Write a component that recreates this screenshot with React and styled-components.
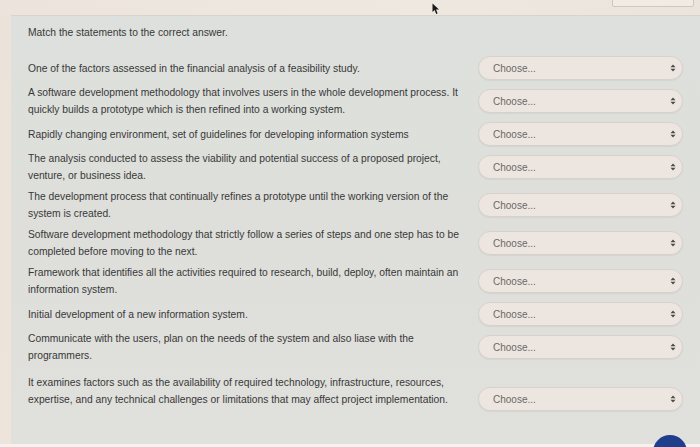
import React from "react";
import styled, { createGlobalStyle } from "styled-components";

const Global = createGlobalStyle`
  html, body { margin: 0; padding: 0; }
  body {
    width: 700px;
    height: 447px;
    overflow: hidden;
    background: #ebe5de;
    font-family: "Liberation Sans", Arial, sans-serif;
  }
`;

const Page = styled.div`
  position: relative;
  width: 700px;
  height: 447px;
  display: flex;
  flex-direction: column;
`;

const TopStrip = styled.div`
  height: 15px;
  flex-shrink: 0;
  background: linear-gradient(90deg, #ece4dc, #efe8e1 60%, #eae4dd);
  position: relative;
`;

const TopBox = styled.div`
  position: absolute;
  left: 612px;
  top: -6px;
  width: 80px;
  height: 11px;
  border: 1px solid #d4c6bc;
  border-radius: 2px;
  background: #f1ebe4;
`;

const Body = styled.div`
  flex: 1;
  display: flex;
  min-height: 0;
`;

const LeftEdge = styled.div`
  width: 11px;
  flex-shrink: 0;
  background: linear-gradient(180deg, #ebe2da, #ede4dc);
`;

const Panel = styled.div`
  flex: 1;
  background: linear-gradient(180deg, #dde0dc 0%, #dedfdb 50%, #e0e0dc 100%);
  border-top: 1px solid #d7d4ce;
  padding: 8px 0 0 17px;
  box-sizing: border-box;
  color: #383838;
  font-size: 10.3px;
`;

const Title = styled.div`
  line-height: 18px;
  margin-bottom: 14px;
`;

const List = styled.div`
  display: flex;
  flex-direction: column;
  gap: 4px;
`;

const Row = styled.div`
  display: grid;
  grid-template-columns: 450px 205px;
  align-items: center;
  margin-top: ${(p) => (p.$extra ? "6px" : "0")};
`;

const Statement = styled.div`
  line-height: 17px;
  padding-right: 4px;
  white-space: nowrap;
`;

const Select = styled.div`
  height: 24px;
  border-radius: 12px;
  background: #ede6e0;
  border: 1px solid #d8d1cb;
  box-shadow: 0 1px 1px rgba(0, 0, 0, 0.05);
  box-sizing: border-box;
  display: flex;
  align-items: center;
  justify-content: space-between;
  padding: 0 6px 0 14px;
  color: #6b6866;
  font-size: 10px;
  transform: translateY(${(p) => p.$shift || 0}px);
`;

const Arrows = () => (
  <svg width="6" height="8" viewBox="0 0 6 8">
    <path d="M3 0.5 L5.5 3.3 H0.5 Z" fill="#4a4a4a" />
    <path d="M3 7.5 L5.5 4.7 H0.5 Z" fill="#4a4a4a" />
  </svg>
);

const Cursor = styled.svg`
  position: absolute;
  left: 432px;
  top: 3px;
`;

const Dot = styled.div`
  position: absolute;
  left: 653px;
  top: 435px;
  width: 34px;
  height: 34px;
  border-radius: 50%;
  background: #1f3f8c;
`;

const BottomStrip = styled.div`
  height: 3px;
  flex-shrink: 0;
  background: #f4f3ef;
`;

const statements = [
  ["One of the factors assessed in the financial analysis of a feasibility study."],
  [
    "A software development methodology that involves users in the whole development process. It",
    "quickly builds a prototype which is then refined into a working system.",
  ],
  ["Rapidly changing environment, set of guidelines for developing information systems"],
  [
    "The analysis conducted to assess the viability and potential success of a proposed project,",
    "venture, or business idea.",
  ],
  [
    "The development process that continually refines a prototype until the working version of the",
    "system is created.",
  ],
  [
    "Software development methodology that strictly follow a series of steps and one step has to be",
    "completed before moving to the next.",
  ],
  [
    "Framework that identifies all the activities required to research, build, deploy, often maintain an",
    "information system.",
  ],
  ["Initial development of a new information system."],
  [
    "Communicate with the users, plan on the needs of the system and also liase with the",
    "programmers.",
  ],
  [
    "It examines factors such as the availability of required technology, infrastructure, resources,",
    "expertise, and any technical challenges or limitations that may affect project implementation.",
  ],
];

export default function App() {
  return (
    <Page>
      <Global />
      <TopStrip>
        <TopBox />
      </TopStrip>
      <Body>
        <LeftEdge />
        <Panel>
          <Title>Match the statements to the correct answer.</Title>
          <List>
            {statements.map((lines, i) => (
              <Row key={i} $extra={i === 9}>
                <Statement>
                  {lines.map((l, j) => (
                    <div key={j}>{l}</div>
                  ))}
                </Statement>
                <Select $shift={i === 9 ? 8 : 0}>
                  <span>Choose...</span>
                  <Arrows />
                </Select>
              </Row>
            ))}
          </List>
        </Panel>
      </Body>
      <BottomStrip />
      <Cursor width="8" height="12" viewBox="0 0 8 12">
        <path d="M0.5 0.5 L0.5 9 L2.6 7 L4.2 11 L5.6 10.3 L4 6.5 L7 6.5 Z" fill="#1a1a1a" />
      </Cursor>
      <Dot />
    </Page>
  );
}
